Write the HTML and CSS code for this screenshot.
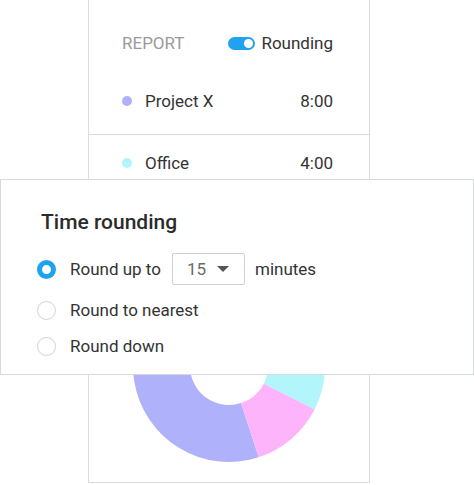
FILE: index.html
```html
<!DOCTYPE html>
<html>
<head>
<meta charset="utf-8">
<link rel="stylesheet" href="styles.css">
</head>
<body>
<div class="stage">
  <div class="card">
    <div class="card-head">
      <span class="label">REPORT</span>
      <span class="toggle-wrap"><span class="toggle"><span class="knob"></span></span><span>Rounding</span></span>
    </div>
    <div class="row row-first">
      <span class="proj"><span class="dot dot-lav"></span>Project X</span>
      <span>8:00</span>
    </div>
    <div class="row row-second">
      <span class="proj"><span class="dot dot-cyan"></span>Office</span>
      <span>4:00</span>
    </div>
    <div class="chart">
      <svg width="192" height="192" viewBox="0 0 192 192">
        <path fill="#afb2fa" d="M125.67 187.30 A96 96 0 1 1 96 0 L96 57 A39 39 0 1 0 108.05 133.09 Z"/>
        <path fill="#b2f6fb" d="M96 0 A96 96 0 0 1 181.54 139.58 L130.75 113.71 A39 39 0 0 0 96 57 Z"/>
        <path fill="#feb4fa" d="M181.54 139.58 A96 96 0 0 1 125.67 187.30 L108.05 133.09 A39 39 0 0 0 130.75 113.71 Z"/>
      </svg>
    </div>
  </div>

  <div class="popup">
    <div class="popup-title">Time rounding</div>
    <div class="opt opt-first">
      <span class="radio radio-on"></span>
      <span>Round up to</span>
      <span class="select"><span class="select-val">15</span><span class="caret"></span></span>
      <span>minutes</span>
    </div>
    <div class="opt">
      <span class="radio"></span>
      <span>Round to nearest</span>
    </div>
    <div class="opt">
      <span class="radio"></span>
      <span>Round down</span>
    </div>
  </div>
</div>
</body>
</html>
```

FILE: styles.css
```css
* { box-sizing: border-box; }
html, body {
  margin: 0;
  padding: 0;
  background: #fff;
}
body {
  font-family: Roboto, "Liberation Sans", sans-serif;
  color: #333;
  font-size: 17px;
  line-height: 20px;
}
.stage {
  position: relative;
  width: 474px;
  height: 485px;
  overflow: hidden;
}
.card {
  margin-left: 88px;
  width: 282px;
  border: 1px solid #d6dce2;
  border-top: none;
  padding-bottom: 20px;
}
.card-head {
  display: flex;
  justify-content: space-between;
  align-items: flex-start;
  padding: 33px 36px 0 33px;
  height: 72px;
}
.label {
  color: #9a9a9a;
}
.toggle-wrap {
  display: flex;
  align-items: center;
  gap: 6px;
}
.toggle {
  width: 27px;
  height: 13px;
  border-radius: 7px;
  background: #1fa3f0;
  position: relative;
  display: inline-block;
}
.knob {
  position: absolute;
  right: 2px;
  top: 2px;
  width: 9px;
  height: 9px;
  border-radius: 50%;
  background: #fff;
}
.row {
  display: flex;
  justify-content: space-between;
  align-items: flex-start;
  padding: 0 36px 0 33px;
}
.row-first {
  padding-top: 19px;
  height: 63px;
  border-bottom: 1px solid #d6dce2;
}
.row-second {
  padding-top: 18px;
}
.proj {
  display: flex;
  align-items: center;
  gap: 13px;
  height: 20px;
}
.dot {
  width: 10px;
  height: 10px;
  border-radius: 50%;
  display: inline-block;
}
.dot-lav { background: #afb2fa; }
.dot-cyan { background: #b2f6fb; }
.chart {
  margin-top: 97px;
  display: flex;
  justify-content: center;
}
.chart svg { display: block; }

.popup {
  position: absolute;
  left: 0;
  top: 179px;
  width: 474px;
  height: 196px;
  background: #fff;
  border: 1px solid #d6dadf;
  padding: 30px 0 0 36px;
}
.popup-title {
  font-size: 21px;
  line-height: 24px;
  font-weight: 500;
  color: #2b2b2b;
  padding-left: 4px;
  margin-bottom: 19px;
}
.opt {
  display: flex;
  align-items: center;
  height: 20px;
  margin-bottom: 16px;
}
.opt-first {
  height: 32px;
  margin-bottom: 15px;
}
.radio {
  width: 19px;
  height: 19px;
  border-radius: 50%;
  border: 1.5px solid #cfd3d7;
  margin-right: 14px;
  flex: none;
}
.radio-on {
  border: 5px solid #1fa3f0;
}
.select {
  display: flex;
  align-items: center;
  width: 73px;
  height: 32px;
  border: 1px solid #cdd1d5;
  border-radius: 2px;
  margin: 0 10px 0 11px;
  padding-left: 14px;
  color: #6a6a6a;
}
.caret {
  width: 0;
  height: 0;
  border-left: 6px solid transparent;
  border-right: 6px solid transparent;
  border-top: 6px solid #555;
  margin-left: 11px;
}
```
